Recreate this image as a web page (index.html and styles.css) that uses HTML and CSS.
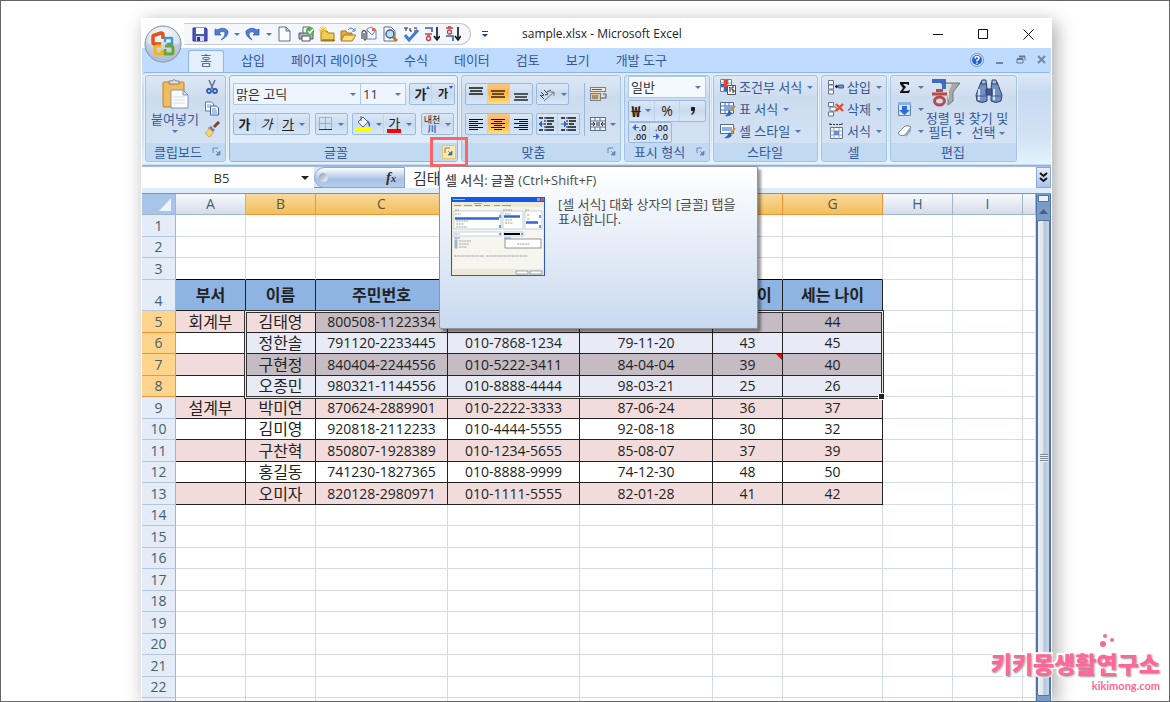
FILE: index.html
```html
<!DOCTYPE html>
<html lang="ko">
<head>
    <meta charset="UTF-8">
    <meta name="viewport" content="width=device-width, initial-scale=1.0">
    <title>sample.xlsx - Microsoft Excel</title>
    <link rel="stylesheet" href="styles.css">
</head>
<body>

<div class="window">
    <header class="titlebar">
        <button class="office" aria-label="Office 단추">
            <svg width="38" height="38" viewBox="0 0 38 38">
                <defs>
                    <radialGradient id="orb" cx=".5" cy=".3" r=".75"><stop offset="0" stop-color="#fff"/><stop offset=".55" stop-color="#dfe4ec"/><stop offset="1" stop-color="#8d9cb6"/></radialGradient>
                </defs>
                <circle cx="19" cy="19" r="18" fill="url(#orb)" stroke="#7f8fab"/>
                <path d="M2 20a17 17 0 0 0 34 0q-17-7-34 0z" fill="#b4c3dc" opacity=".55"/>
                <g fill="none" stroke-linejoin="round">
                    <path d="M17 19h-6q-2 0-2-2v-5q0-2 2-2l6-2q2 0 2 2v4" stroke="#e2521b" stroke-width="3.500"/>
                    <path d="M21 17v-4h7v6h-5" stroke="#3f9be0" stroke-width="2.500"/>
                    <path d="M17 21h-4q-2 0-2 2v4q0 2 2 2h5v-4" stroke="#f5b41a" stroke-width="3"/>
                    <path d="M21 21h6q2 0 2 2v4q0 2-2 2h-6v-5" stroke="#6aa82c" stroke-width="3"/>
                </g>
            </svg>
        </button>
        <div class="quick">
            <button aria-label="저장"><svg width="16" height="16"><path d="M1 2h13l1 1v12H1z" fill="#4a55b8" stroke="#2c3590"/><path d="M4 2h8v6H4z" fill="#fff"/><path d="M4 10h8v5H4z" fill="#d5dcf3"/><path d="M5 11h3v4H5z" fill="#2c3590"/></svg></button>
            <button aria-label="실행 취소"><svg width="16" height="16"><path d="M2 3v6h6L6 7q3-3 6-1 1 4-4 8 8-4 7-9-4-5-11-1z" fill="#4f7fd0" stroke="#2b57ab" stroke-width=".7"/></svg></button>
            <button class="drop" aria-label="실행 취소 목록"><i class="arrow"></i></button>
            <button aria-label="다시 실행"><svg width="16" height="16"><path d="M14 3v6H8l2-2Q7 4 4 7q-1 3 3 7Q0 10 1 5q5-5 11-1z" fill="#4f7fd0" stroke="#2b57ab" stroke-width=".7"/></svg></button>
            <button class="drop" aria-label="다시 실행 목록"><i class="arrow"></i></button>
            <button aria-label="새로 만들기"><svg width="16" height="16"><path d="M2 1h7l4 4v10H2z" fill="#fdfdff" stroke="#5d6f93"/><path d="M9 1v4h4z" fill="#cbd5ea" stroke="#5d6f93"/></svg></button>
            <button aria-label="빠른 인쇄"><svg width="16" height="16"><path d="M5 7V1h7v6" fill="#fff" stroke="#666"/><path d="M1 7h14v6H1z" fill="#adb2bd" stroke="#555c6c"/><path d="M4 10h8v5H4z" fill="#fff" stroke="#555"/><circle cx="12" cy="5" r="4" fill="#4eae49"/><path d="M10 5l2 2 3-4" fill="none" stroke="#fff" stroke-width="1.500"/></svg></button>
            <button aria-label="새 폴더"><svg width="16" height="16"><path d="M2 5h6l1 2h6v8H2z" fill="#f0cd57" stroke="#a6791b"/><path d="M3 14h12v1" stroke="#6f5213" fill="none"/><path d="M4 0v8M0 4h8M1 1l6 6M7 1L1 7" stroke="#f8bd22"/></svg></button>
            <button aria-label="열기"><svg width="16" height="16"><path d="M1 5h5l1 2h5v7H1z" fill="#e5ae3c" stroke="#a6791b"/><path d="M4 9h12l-4 6H1z" fill="#ffdf79" stroke="#a6791b"/><path d="M8 4q3-4 6 0M15 2v3h-3" fill="none" stroke="#4974be"/></svg></button>
            <button aria-label="전자 메일"><svg width="16" height="16"><path d="M6 3l4-2 5 3v9H6z" fill="#f4f8ff" stroke="#6d84ae"/><path d="M6 4l5 5 4-5" fill="none" stroke="#6d84ae"/><path d="M11 2h3v3h-3z" fill="#d86858"/><path d="M1 13V6q2-3 4 0v7q-1 2-2 0V7" fill="none" stroke="#555" stroke-width="1.300"/></svg></button>
            <button aria-label="인쇄 미리 보기"><svg width="16" height="16"><path d="M2 1h7l4 4v10H2z" fill="#fff" stroke="#5d6f93"/><path d="M11 11l4 4" stroke="#c27b23" stroke-width="3"/><circle cx="8" cy="8" r="4" fill="#bcdcf6" stroke="#405b80" stroke-width="1.400"/></svg></button>
            <button aria-label="맞춤법 검사"><svg width="16" height="16"><path d="M1 2h4M3 2v3M7 2v3h2M11 2h3M11 5h3" stroke="#222" fill="none"/><path d="M2 9l4 5L15 4" fill="none" stroke="#4979d2" stroke-width="3"/></svg></button>
            <button aria-label="오름차순 정렬"><svg width="16" height="16"><path d="M1 2h7v4" fill="none" stroke="#355eb6" stroke-width="1.600"/><path d="M1 8h7M3 10h3" stroke="#c2404c" stroke-width="1.400"/><circle cx="4.500" cy="12.500" r="2" fill="none" stroke="#c2404c" stroke-width="1.400"/><path d="M13 1v11M10 10l3 4 3-4" fill="none" stroke="#111" stroke-width="1.600"/></svg></button>
            <button aria-label="내림차순 정렬"><svg width="16" height="16"><path d="M1 2h7M3 1h3" stroke="#c2404c" stroke-width="1.400"/><circle cx="4.500" cy="6" r="2" fill="none" stroke="#c2404c" stroke-width="1.400"/><path d="M1 10h7v5" fill="none" stroke="#355eb6" stroke-width="1.600"/><path d="M13 1v11M10 10l3 4 3-4" fill="none" stroke="#111" stroke-width="1.600"/></svg></button>
        </div>
        <button class="customize" aria-label="빠른 실행 도구 모음 사용자 지정"><i class="arrow"></i></button>
        <span class="caption">sample.xlsx - Microsoft Excel</span>
        <div class="controls">
            <button aria-label="최소화"><svg width="11" height="11"><path d="M0 5.500h10" stroke="#111"/></svg></button>
            <button aria-label="최대화"><svg width="11" height="11"><path d="M.5.5h9v9h-9z" fill="none" stroke="#111"/></svg></button>
            <button aria-label="닫기"><svg width="11" height="11"><path d="M.5.5l10 10M10.500.5l-10 10" stroke="#111"/></svg></button>
        </div>
    </header>

    <nav class="tabs">
        <a class="tab active" href="#home">홈</a>
        <a class="tab" href="#insert">삽입</a>
        <a class="tab" href="#layout">페이지 레이아웃</a>
        <a class="tab" href="#formulas">수식</a>
        <a class="tab" href="#data">데이터</a>
        <a class="tab" href="#review">검토</a>
        <a class="tab" href="#view">보기</a>
        <a class="tab" href="#developer">개발 도구</a>
        <div class="doc-controls">
            <button aria-label="도움말"><svg width="14" height="14"><circle cx="7" cy="7" r="6.500" fill="#dcebff" stroke="#6c93cf"/><circle cx="7" cy="7" r="5" fill="#2a62d4"/><path d="M5 5.500q0-2 2-2t2 1.600Q9 6.500 7 7.500v1M7 9.500v1.300" fill="none" stroke="#fff" stroke-width="1.500"/></svg></button>
            <button aria-label="창 최소화"><svg width="10" height="10"><path d="M1 8h7" stroke="#74869f" stroke-width="2"/></svg></button>
            <button aria-label="창 복원"><svg width="10" height="10"><path d="M3 1.500h6v4M1 4h6v4H1z" fill="none" stroke="#66768d"/><path d="M3 1.500h6M1 4h6" stroke="#66768d" stroke-width="2"/></svg></button>
            <button aria-label="창 닫기"><svg width="10" height="10"><path d="M1 1l7 7M8 1L1 8" stroke="#74869f" stroke-width="2"/></svg></button>
        </div>
    </nav>

    <div class="ribbon">
        <section class="group clipboard">
            <div class="body">
                <button class="big">
                    <svg width="28" height="30"><rect x="2" y="3" width="21" height="25" rx="1" fill="#f1bd5b" stroke="#bf8128"/><path d="M8 5V2h3q2-3 4 0h3v3z" fill="#dfe3e9" stroke="#7c828c"/><path d="M10 11h12l5 5v13H10z" fill="#fbfcff" stroke="#8794b0"/><path d="M22 11v5h5z" fill="#d5ddec" stroke="#8794b0"/><path d="M12 18h12M12 21h12M12 24h12" stroke="#d4dae6"/></svg>
                    붙여넣기
                    <i class="arrow"></i>
                </button>
                <div class="stack">
                    <button aria-label="잘라내기"><svg width="16" height="16"><path d="M5 1l4 9M11 1L7 10" stroke="#68768f" stroke-width="1.600"/><circle cx="5" cy="12" r="2" fill="none" stroke="#2d5eb6" stroke-width="1.800"/><circle cx="11" cy="12" r="2" fill="none" stroke="#2d5eb6" stroke-width="1.800"/></svg></button>
                    <button aria-label="복사"><svg width="16" height="16"><path d="M1.500 2h6l2 2v7h-8z" fill="#fff" stroke="#5576b4"/><path d="M3 5h4M3 7h4" stroke="#7d9fd8"/><path d="M6.500 6h6l2 2v7h-8z" fill="#fff" stroke="#3e62a6"/><path d="M8 9h4M8 11h5M8 13h5" stroke="#6289cc"/></svg></button>
                    <button aria-label="서식 복사"><svg width="16" height="16"><path d="M15 1l-5 5" stroke="#7a4820" stroke-width="3"/><path d="M7 5l4 4-2 2-5-4z" fill="#7883a4"/><path d="M5 7l4 4q-1 4-4 5L1 12q3-1 4-5z" fill="#f7d66a" stroke="#c59530" stroke-width=".7"/></svg></button>
                </div>
            </div>
            <div class="label"><span>클립보드</span><button class="launcher" aria-label="클립보드 옵션"><svg width="10" height="10"><path d="M1 6V1h5" fill="none" stroke="#6a88b4"/><path d="M4 4l3 3M8 4v4H4z" stroke="#6a88b4" stroke-width=".8" fill="#6a88b4"/></svg></button></div>
        </section>

        <section class="group font hot">
            <div class="body rows">
                <div class="line">
                    <div class="combos">
                        <span class="combo family"><select aria-label="글꼴"><option>맑은 고딕</option></select><i class="arrow"></i></span>
                        <span class="combo size"><select aria-label="글꼴 크기"><option>11</option></select><i class="arrow"></i></span>
                    </div>
                    <div class="strip">
                        <button class="wide strong" aria-label="글꼴 크기 크게"><b>가</b><i class="tick up"></i></button>
                        <button class="wide small" aria-label="글꼴 크기 작게"><b>가</b><i class="tick"></i></button>
                    </div>
                </div>
                <div class="line">
                    <div class="strip">
                        <button class="wide"><b>가</b></button>
                        <button class="wide"><em>가</em></button>
                        <button class="pick"><u>가</u><i class="arrow"></i></button>
                    </div>
                    <div class="strip">
                        <button class="pick" aria-label="테두리"><svg width="14" height="14"><path d="M.5.5h12v12H.5zM.5 6.500h12M6.500.5v12" fill="none" stroke="#7b8798" stroke-dasharray="1 1"/><path d="M0 12.500h13" stroke="#333"/></svg><i class="arrow"></i></button>
                    </div>
                    <div class="strip">
                        <button class="pick" aria-label="채우기 색"><svg width="16" height="16"><path d="M3 6l5-5 5 5-5 5z" fill="#f2f6fc" stroke="#4f6485"/><path d="M6 5V0" stroke="#4f6485"/><path d="M12 4q4 2 3 7-2-1-2-4z" fill="#3a6ed0"/><path d="M0 12h16v4H0z" fill="#ff0"/></svg><i class="arrow"></i></button>
                        <button class="pick" aria-label="글꼴 색"><span class="swatch">가</span><i class="arrow"></i></button>
                    </div>
                    <div class="strip">
                        <button class="pick ruby" aria-label="윗주 필드"><span>내천<b>川</b></span><i class="arrow"></i></button>
                    </div>
                </div>
            </div>
            <div class="label">
                <span>글꼴</span>
                <div class="anchor">
                    <button class="launcher" aria-label="글꼴 옵션"><svg width="10" height="10"><path d="M1 6V1h5" fill="none" stroke="#6f7f91"/><path d="M4 4l3 3M8 4v4H4z" stroke="#48709e" stroke-width=".8" fill="#48709e"/></svg></button>
                    <div class="callout"></div>
                    <div class="tooltip">
                        <h2>셀 서식: 글꼴 (Ctrl+Shift+F)</h2>
                        <div class="tip">
                            <svg class="thumb" width="94" height="79" viewBox="0 0 94 79">
                                <rect width="94" height="79" fill="#2d58c4"/>
                                <rect width="94" height="5" fill="#1557e6"/><path d="M2 2.500h12" stroke="#9fc0ff"/><rect x="86" y="1" width="3" height="3" fill="#7aa6f8"/><rect x="90" y="1" width="3" height="3" fill="#e0543a"/>
                                <rect x="1" y="5" width="92" height="73" fill="#ece9d8"/>
                                <rect x="2" y="10" width="90" height="62" fill="#f7f6ee"/>
                                <path d="M3 8.500h7M13 8.500h8M33 8.500h6M43 8.500h6M51 8.500h9" stroke="#9b9b93"/><path d="M23 6.500h8" stroke="#f09b30"/><path d="M24 8.500h6" stroke="#888"/>
                                <g fill="#fff" stroke="#9fb5d0" stroke-width=".6"><rect x="3" y="14" width="47" height="18"/><rect x="52" y="14" width="20" height="18"/><rect x="74" y="14" width="17" height="18"/><rect x="3" y="35" width="47" height="4"/><rect x="53" y="35" width="19" height="4"/><rect x="54" y="42" width="36" height="9" stroke="#555"/></g>
                                <path d="M4 21.500h44M53 19.500h16M75 25.500h12" stroke="#316ac5" stroke-width="2.500"/>
                                <path d="M4 13h4M52 13h9M74 13h4M4 17h6M5 24h12M5 27h8M5 30h11M54 17h6M54 23h7M54 26h8M76 18h3M76 22h3M4 37h5M8 44h12M8 47h10M8 50h8M66 47h13M3 59h30M35 59h42" stroke="#8a8a8a" stroke-width=".8" stroke-dasharray="2 .6"/>
                                <path d="M3 41h6M53 41h7" stroke="#6f96e0"/><path d="M53 37h16" stroke="#000" stroke-width="2"/>
                                <path d="M49 18v3M49 28v3M89 18v3M89 28v3M48 37h2M70 37h2" stroke="#7299e8" stroke-width="2"/>
                                <g fill="#fff" stroke="#4d73a5" stroke-width=".6"><rect x="4" y="43" width="2" height="2"/><rect x="4" y="46" width="2" height="2"/><rect x="4" y="49" width="2" height="2"/><rect x="65" y="74" width="12" height="3"/><rect x="79" y="74" width="12" height="3"/></g>
                            </svg>
                            <p>[셀 서식] 대화 상자의 [글꼴] 탭을 표시합니다.</p>
                        </div>
                    </div>
                </div>
            </div>
        </section>

        <section class="group align">
            <div class="body">
                <div class="rows">
                    <div class="line">
                        <div class="strip">
                            <button class="wide" aria-label="위쪽 맞춤"><svg width="15" height="14"><path d="M0 1h14M1 4h12M0 7h14" stroke="#444" stroke-width="2"/></svg></button>
                            <button class="wide on" aria-label="가운데 맞춤"><svg width="15" height="14"><path d="M0 4h14M1 7h12M0 10h14" stroke="#6b4d1c" stroke-width="2"/></svg></button>
                            <button class="wide" aria-label="아래쪽 맞춤"><svg width="15" height="14"><path d="M0 7h14M1 10h12M0 13h14" stroke="#555" stroke-width="2"/></svg></button>
                        </div>
                        <div class="strip">
                            <button class="pick" aria-label="방향"><svg width="17" height="16"><path d="M1 9l4 4M2 6l3 3-3 1M5 4l4 4-3 1M8 6l4-2" fill="none" stroke="#444"/><path d="M5 15L15 6M11 6h4v4" fill="none" stroke="#777"/></svg><i class="arrow"></i></button>
                        </div>
                    </div>
                    <div class="line">
                        <div class="strip">
                            <button class="wide" aria-label="텍스트 왼쪽 맞춤"><svg width="15" height="13"><path d="M0 1.500h14M0 3.500h9M0 5.500h14M0 7.500h9M0 9.500h14M0 11.500h9" stroke="#111"/></svg></button>
                            <button class="wide on" aria-label="텍스트 가운데 맞춤"><svg width="15" height="13"><path d="M0 1.500h14M3 3.500h8M0 5.500h14M3 7.500h8M0 9.500h14M3 11.500h8" stroke="#111"/></svg></button>
                            <button class="wide" aria-label="텍스트 오른쪽 맞춤"><svg width="15" height="13"><path d="M0 1.500h14M5 3.500h9M0 5.500h14M5 7.500h9M0 9.500h14M5 11.500h9" stroke="#111"/></svg></button>
                        </div>
                        <div class="strip">
                            <button class="indent" aria-label="내어쓰기"><svg width="16" height="14"><path d="M0 1h4M7 1h8M8 4h7M8 7h5M7 10h8M0 13h4M7 13h8" stroke="#111" stroke-width="1.600"/><path d="M6 0v14" stroke="#111" stroke-dasharray="2 1"/><path d="M6 7H1M3 4L0 7l3 3" stroke="#2f67cb" fill="#2f67cb"/></svg></button>
                            <button class="indent" aria-label="들여쓰기"><svg width="16" height="14"><path d="M0 1h4M7 1h8M8 4h7M8 7h5M7 10h8M0 13h4M7 13h8" stroke="#111" stroke-width="1.600"/><path d="M6 0v14" stroke="#111" stroke-dasharray="2 1"/><path d="M0 7h5M3 4l3 3-3 3" stroke="#2f67cb" fill="#2f67cb"/></svg></button>
                        </div>
                    </div>
                </div>
                <div class="rows merge">
                    <button aria-label="텍스트 줄 바꿈"><svg width="17" height="16"><rect x=".5" y="1.500" width="15" height="4" fill="#f8e9cf" stroke="#75818f"/><rect x=".5" y="7.500" width="10" height="7" fill="#f3c581" stroke="#75818f"/><path d="M2 10h6M2 12h6M2 3.500h10" stroke="#4c5b70"/><path d="M13 8h3v4h-5" fill="none" stroke="#555"/></svg></button>
                    <button aria-label="병합하고 가운데 맞춤"><svg width="16" height="16"><rect x=".5" y="1.500" width="15" height="13" fill="#eef4fd" stroke="#61728a"/><path d="M5 1v4M10 1v4M5 11v4M10 11v4M0 5h16M0 11h16" stroke="#61728a"/><path d="M1 8h4M11 8h4M3 6l2 2-2 2M13 6l-2 2 2 2M7 6v4M9 6v4" stroke="#222" fill="none"/></svg><i class="arrow"></i></button>
                </div>
            </div>
            <div class="label"><span>맞춤</span><button class="launcher" aria-label="맞춤 옵션"><svg width="10" height="10"><path d="M1 6V1h5" fill="none" stroke="#6a88b4"/><path d="M4 4l3 3M8 4v4H4z" stroke="#6a88b4" stroke-width=".8" fill="#6a88b4"/></svg></button></div>
        </section>

        <section class="group number">
            <div class="body tight">
                <span class="combo"><select aria-label="표시 형식"><option>일반</option></select><i class="arrow"></i></span>
                <div class="strip full">
                    <button class="pick"><b class="won">₩</b><i class="arrow"></i></button>
                    <button class="glyph">%</button>
                    <button class="glyph" aria-label="쉼표 스타일"><svg width="6" height="10"><path d="M1 1h4v3q0 3-3 5l-1-1q2-1 2-3H1z" fill="#222"/></svg></button>
                </div>
                <div class="strip half">
                    <button aria-label="자릿수 늘림"><span class="digits"><span><svg width="7" height="7"><path d="M7 3.500H2M4 .5l-3 3 3 3" stroke="#2f67cb" fill="#2f67cb"/></svg>.0</span><span>.00</span></span></button>
                    <button aria-label="자릿수 줄임"><span class="digits"><span>.00</span><span><svg width="7" height="7"><path d="M0 3.500h5M3 .5l3 3-3 3" stroke="#2f67cb" fill="#2f67cb"/></svg>.0</span></span></button>
                </div>
            </div>
            <div class="label"><span>표시 형식</span><button class="launcher" aria-label="표시 형식 옵션"><svg width="10" height="10"><path d="M1 6V1h5" fill="none" stroke="#6a88b4"/><path d="M4 4l3 3M8 4v4H4z" stroke="#6a88b4" stroke-width=".8" fill="#6a88b4"/></svg></button></div>
        </section>

        <section class="group style">
            <div class="body menu">
                <button><svg width="16" height="16"><path d="M.5.5h11v12H.5z" fill="#fff" stroke="#6e7fa0"/><path d="M4 1v12M8 1v12M1 4h10M1 8h10" stroke="#8ba1c8"/><path d="M4 1h4v4H4z" fill="#e0452f"/><path d="M1 5h3v3H1zM4 8h4v4H4z" fill="#3469c4"/><path d="M4 5h3v3H4z" fill="#e0452f"/><path d="M7.500 6.500h8v9h-8z" fill="#fff" stroke="#555"/><path d="M9 9l1-1v5M12 13h2v-2h-2V8h2" fill="none" stroke="#222"/></svg>조건부 서식<i class="arrow"></i></button>
                <button><svg width="16" height="16"><path d="M.5 1.500h13v11H.5z" fill="#fff" stroke="#4d6aa0"/><path d="M5 1v12M9 1v12M1 5h13M1 9h13" stroke="#4d6aa0"/><path d="M5 5h9v4H5z" fill="#7ba6e6"/><path d="M15 5l-4 5" stroke="#d18b2c" stroke-width="2"/><path d="M9 9l3 3q-2 4-7 3 3-2 4-6z" fill="#2f62c4"/></svg>표 서식<i class="arrow"></i></button>
                <button><svg width="16" height="16"><path d="M.5 1.500h13v9H.5z" fill="#fff" stroke="#4d6aa0"/><path d="M2 4h10v4H2z" fill="#89b0ea"/><path d="M15 5l-4 5" stroke="#d18b2c" stroke-width="2"/><path d="M9 9l3 3q-2 4-8 3 4-2 5-6z" fill="#2f62c4"/></svg>셀 스타일<i class="arrow"></i></button>
            </div>
            <div class="label"><span>스타일</span></div>
        </section>

        <section class="group cell">
            <div class="body menu">
                <button><svg width="16" height="16"><path d="M.5 1.500h5v4h-5zM.5 6h5v4h-5zM.5 11h5v4h-5z" fill="#fff" stroke="#64748e"/><path d="M10.500 6h5v3h-5z" fill="#6f96d8" stroke="#3a5d9c"/><path d="M10 7.500H7M9 6L7 7.500 9 9z" stroke="#222" fill="#222"/></svg>삽입<i class="arrow"></i></button>
                <button><svg width="16" height="16"><path d="M.5 1.500h5v4h-5zM2 6h6v4H2zM.5 11h5v4h-5z" fill="#fff" stroke="#64748e"/><path d="M8 3l7 7M15 3l-7 7" stroke="#f04a28" stroke-width="2.400"/></svg>삭제<i class="arrow"></i></button>
                <button><svg width="16" height="16"><path d="M2 1.500h12M2 0v3M14 0v3" stroke="#333" stroke-dasharray="2 1"/><path d="M2.500 4.500h12v11h-12z" fill="#fff" stroke="#64748e"/><path d="M6 5v11M11 5v11M2 8h12M2 12h12" stroke="#8fa1bd"/><path d="M6 8h5v4H6z" fill="#5e8fdc"/></svg>서식<i class="arrow"></i></button>
            </div>
            <div class="label"><span>셀</span></div>
        </section>

        <section class="group edit">
            <div class="body">
                <div class="menu">
                    <button aria-label="합계"><svg width="16" height="14"><path d="M3 2h9v3h-1q0-1-2-1H6l3 3-3 4h4q2 0 2-1h1l-1 3H3v-1l3-4-3-4z" fill="#111"/></svg><i class="arrow"></i></button>
                    <button aria-label="채우기"><svg width="16" height="16"><path d="M1.500 1.500h12v13h-12z" fill="#d5e5fb" stroke="#5f83bd"/><path d="M1 1h13v3H1z" fill="#8fb1e6"/><path d="M5 5h5v4h3l-5.500 5L2 9h3z" fill="#2f6bd8"/></svg><i class="arrow"></i></button>
                    <button aria-label="지우기"><svg width="16" height="14"><path d="M1 9l7-7q3-1 6 1l-6 8q-5 2-7-2z" fill="#fff" stroke="#74808f"/><path d="M8 11l6-8v4l-5 6z" fill="#9aa7b8"/></svg><i class="arrow"></i></button>
                </div>
                <button class="big">
                    <svg width="30" height="29"><path d="M10 5h19l-7 9v9l-5 4V14z" fill="#a9a9a9" stroke="#777"/><path d="M12 6h9l-3 7v9z" fill="#dcdcdc"/><path d="M1 3h12v8" fill="none" stroke="#3d6cc0" stroke-width="4"/><path d="M1 16h15M5 12.500h7" stroke="#b84a4a" stroke-width="3"/><ellipse cx="8.500" cy="23" rx="5" ry="4" fill="none" stroke="#b84a4a" stroke-width="3"/></svg>
                    <span>정렬 및<br>필터<i class="arrow"></i></span>
                </button>
                <button class="big">
                    <svg width="28" height="29"><g stroke="#2c4270"><path d="M6 4h5l1 6v13q-5 3-10 0l-1-6z" fill="#7290c0"/><path d="M22 4h-5l-1 6v13q5 3 10 0l1-6z" fill="#7290c0"/><path d="M11 11h6v6h-6z" fill="#40598c"/><path d="M7 2h4v4H6zM17 2h4l1 4h-5z" fill="#a8bddf"/></g><path d="M4 11v11M19 11v11" stroke="#d9e5f8" stroke-width="2"/><path d="M2 18h9M17 18h9" stroke="#40598c"/></svg>
                    <span>찾기 및<br>선택<i class="arrow"></i></span>
                </button>
            </div>
            <div class="label"><span>편집</span></div>
        </section>
    </div>

    <div class="formula">
        <label class="namebox"><input aria-label="이름 상자" value="B5"><i class="arrow"></i></label>
        <div class="insert-fn"><span class="knob"></span><button aria-label="함수 삽입"><em>f<small>x</small></em></button></div>
        <input class="entry" aria-label="수식 입력줄" value="김태영">
        <button class="expand" aria-label="수식 입력줄 확장"><svg width="9" height="11"><path d="M1 1l3.500 3L8 1M1 6l3.500 3L8 6" fill="none" stroke="#111" stroke-width="2"/></svg></button>
    </div>

    <div class="workspace">
        <div class="sheet">
            <table>
                <colgroup>
                    <col class="c-head"><col class="c-s"><col class="c-s"><col class="c-l"><col class="c-l"><col class="c-xl"><col class="c-s"><col class="c-m"><col class="c-s"><col class="c-s"><col>
                </colgroup>
                <thead>
                    <tr><th class="corner"><svg width="12" height="13"><path d="M12 0v13H0z" fill="#eef4fc"/></svg></th><th>A</th><th class="sel">B</th><th class="sel">C</th><th class="sel">D</th><th class="sel">E</th><th class="sel">F</th><th class="sel">G</th><th>H</th><th>I</th><th></th></tr>
                </thead>
                <tbody>
                    <tr><th>1</th><td></td><td></td><td></td><td></td><td></td><td></td><td></td><td></td><td></td><td></td></tr>
                    <tr><th>2</th><td></td><td></td><td></td><td></td><td></td><td></td><td></td><td></td><td></td><td></td></tr>
                    <tr class="above"><th>3</th><td></td><td></td><td></td><td></td><td></td><td></td><td></td><td></td><td></td><td></td></tr>
                    <tr class="data head"><th>4</th><td>부서</td><td>이름</td><td>주민번호</td><td></td><td></td><td>만 나이</td><td>세는 나이</td><td></td><td></td><td></td></tr>
                    <tr class="data band picked"><th>5</th><td class="ko">회계부</td><td class="ko current">김태영</td><td>800508-1122334</td><td></td><td></td><td></td><td>44</td><td></td><td></td><td></td></tr>
                    <tr class="data picked"><th>6</th><td></td><td class="ko">정한솔</td><td>791120-2233445</td><td>010-7868-1234</td><td>79-11-20</td><td>43</td><td>45</td><td></td><td></td><td></td></tr>
                    <tr class="data band picked"><th>7</th><td></td><td class="ko">구현정</td><td>840404-2244556</td><td>010-5222-3411</td><td>84-04-04</td><td class="memo">39</td><td>40</td><td></td><td></td><td></td></tr>
                    <tr class="data picked"><th>8</th><td></td><td class="ko">오종민</td><td>980321-1144556</td><td>010-8888-4444</td><td>98-03-21</td><td>25</td><td>26</td><td></td><td></td><td></td></tr>
                    <tr class="data band"><th>9</th><td class="ko">설계부</td><td class="ko">박미연</td><td>870624-2889901</td><td>010-2222-3333</td><td>87-06-24</td><td>36</td><td>37</td><td></td><td></td><td></td></tr>
                    <tr class="data"><th>10</th><td></td><td class="ko">김미영</td><td>920818-2112233</td><td>010-4444-5555</td><td>92-08-18</td><td>30</td><td>32</td><td></td><td></td><td></td></tr>
                    <tr class="data band"><th>11</th><td></td><td class="ko">구찬혁</td><td>850807-1928389</td><td>010-1234-5655</td><td>85-08-07</td><td>37</td><td>39</td><td></td><td></td><td></td></tr>
                    <tr class="data"><th>12</th><td></td><td class="ko">홍길동</td><td>741230-1827365</td><td>010-8888-9999</td><td>74-12-30</td><td>48</td><td>50</td><td></td><td></td><td></td></tr>
                    <tr class="data band"><th>13</th><td></td><td class="ko">오미자</td><td>820128-2980971</td><td>010-1111-5555</td><td>82-01-28</td><td>41</td><td>42</td><td></td><td></td><td></td></tr>
                    <tr><th>14</th><td></td><td></td><td></td><td></td><td></td><td></td><td></td><td></td><td></td><td></td></tr>
                    <tr><th>15</th><td></td><td></td><td></td><td></td><td></td><td></td><td></td><td></td><td></td><td></td></tr>
                    <tr><th>16</th><td></td><td></td><td></td><td></td><td></td><td></td><td></td><td></td><td></td><td></td></tr>
                    <tr><th>17</th><td></td><td></td><td></td><td></td><td></td><td></td><td></td><td></td><td></td><td></td></tr>
                    <tr><th>18</th><td></td><td></td><td></td><td></td><td></td><td></td><td></td><td></td><td></td><td></td></tr>
                    <tr><th>19</th><td></td><td></td><td></td><td></td><td></td><td></td><td></td><td></td><td></td><td></td></tr>
                    <tr><th>20</th><td></td><td></td><td></td><td></td><td></td><td></td><td></td><td></td><td></td><td></td></tr>
                    <tr><th>21</th><td></td><td></td><td></td><td></td><td></td><td></td><td></td><td></td><td></td><td></td></tr>
                    <tr><th>22</th><td></td><td></td><td></td><td></td><td></td><td></td><td></td><td></td><td></td><td></td></tr>
                    <tr><th></th><td></td><td></td><td></td><td></td><td></td><td></td><td></td><td></td><td></td><td></td></tr>
                </tbody>
            </table>
            <div class="marquee"></div>
        </div>
        <div class="scroll">
            <div class="split"></div>
            <button aria-label="위로 스크롤"><svg width="9" height="5"><path d="M0 5l4.500-5L9 5z" fill="#4f5f80"/></svg></button>
            <div class="thumb-bar"><span class="grip"></span></div>
        </div>
    </div>
</div>

<div class="brand">
    <svg width="16" height="14"><g fill="#ff6699"><circle cx="6" cy="3" r="2"/><circle cx="13" cy="7" r="2"/><circle cx="4" cy="11" r="3"/></g></svg>
    <strong>키키몽생활연구소</strong>
    <span>kikimong.com</span>
</div>

</body>
</html>
```
FILE: styles.css
```css
* { box-sizing: border-box; }

body { margin: 0; height: 100vh; padding: 17px 117px 0 140px; overflow: hidden; position: relative; display: flex;
      border: 1px solid #666; background: #fff; font: 13px/16px "Open Sans", "Noto Sans CJK KR", sans-serif; }

button { font: inherit; color: inherit; background: none; border: 0; padding: 0; display: flex; align-items: center; justify-content: center; }
input, select { font: inherit; border: 0; border-radius: 0; background: #fff; color: #333; min-width: 0; outline: none; }
a { text-decoration: none; }
svg { display: block; flex: none; }

.arrow { width: 0; height: 0; flex: none; border: 3px solid transparent; border-top-color: #5478b4; border-bottom: 0; }

.window { flex: 1; min-width: 0; display: flex; flex-direction: column; position: relative; padding: 0 1px; background: #fff;
         box-shadow: 4px 4px 18px rgba(0, 0, 0, 0.35); }

/* Title bar */
.titlebar { height: 30px; flex: none; display: flex; align-items: center; padding-top: 2px; }
.office { position: absolute; left: 3px; top: 7px; z-index: 2; border-radius: 50%; }
.quick { margin-left: 42px; height: 22px; padding: 0 9px 0 7px; display: flex; align-items: center; gap: 5px;
        background: #f3f6fb; border: 1px solid #c3c9d3; border-left-color: transparent; border-radius: 0 11px 11px 0; }
.customize { margin-left: 11px; padding-top: 3px; }
.customize .arrow { border-top-color: #1d4288; }
.customize::before { content: ""; position: absolute; width: 6px; height: 1px; margin-bottom: 8px; background: #1d4288; }
.caption { margin-left: 34px; font-size: 12px; color: #222; }
.controls { margin-left: auto; display: flex; }
.controls button { width: 45px; height: 28px; }

/* Tabs */
.tabs { height: 24px; flex: none; display: flex; align-items: flex-end; padding-left: 46px; background: #bfdbff; color: #3c5f9c; }
.tab { height: 22px; padding: 0 13px; line-height: 20px; color: #34599b; }
.tab.active { padding: 0 11px; margin-right: 4px; line-height: 18px; background: #e6f0fc; border: 1px solid #8fb6ea; border-bottom: 0; border-radius: 3px 3px 0 0; }
.doc-controls { margin-left: auto; height: 24px; padding-right: 4px; display: flex; align-items: center; gap: 11px; }

/* Ribbon */
.ribbon { height: 95px; flex: none; display: flex; align-items: flex-start; gap: 3px; padding: 2px 3px 0; position: relative;
         background: linear-gradient(#dce9f8, #c8daf0 20%, #d3e3f5 70%, #e3f4ff 97%, #8fadd6 98%, #a9c3e6);
         border-top: 1px solid #8fb6ea; border-radius: 3px 3px 0 0; color: #34599b; }
.group { height: 87px; flex: none; display: flex; flex-direction: column; border: 1px solid #a3c2e6; border-radius: 3px;
        background: linear-gradient(#dde8f6, #ccdcef 25%, #d5e5f6); box-shadow: 0 0 0 1px #e8f2fd; }
.group.hot { background: linear-gradient(#eaf3fe, #dbe8f9 30%, #e2effd); border-color: #92b5e0; }
.clipboard { width: 81px; }
.font { width: 229px; }
.align { width: 160px; }
.number { width: 86px; }
.style { width: 105px; }
.cell { width: 66px; }
.edit { width: 127px; }
.body { flex: 1; min-height: 0; display: flex; }
.label { height: 18px; flex: none; display: flex; align-items: center; padding-right: 1px; background: #c1d9f1; border-radius: 0 0 2px 2px; }
.label > span { flex: 1; text-align: center; }
.launcher { width: 14px; height: 14px; }
.hot .launcher { background: #fde9a9; border: 1px solid #e3c77b; }

.big { flex-direction: column; justify-content: flex-start; padding-top: 2px; gap: 4px; line-height: 14px; }
.big .arrow { display: inline-block; margin-left: 4px; vertical-align: middle; }
.clipboard .big { width: 58px; line-height: 18px; padding-top: 3px; gap: 1px; }
.clipboard .big .arrow { margin: 1px 0 0; }
.stack { display: flex; flex-direction: column; gap: 5px; padding-top: 3px; }

.rows { display: flex; flex-direction: column; gap: 8px; padding: 7px 3px 0; }
.line { display: flex; gap: 3px; }
.font .line { justify-content: space-between; }
.combos { display: flex; }
.combo { height: 22px; position: relative; display: flex; background: #eef5fd; border: 1px solid #b0c9e8; color: #333; }
.combo select { flex: 1; appearance: none; padding: 0 2px; background: none; line-height: 20px; }
.combo .arrow { position: absolute; right: 4px; top: 9px; pointer-events: none; }
.family { width: 128px; }
.size { width: 46px; margin-left: -1px; }
.strip { display: flex; height: 22px; border: 1px solid #9bb8df; border-radius: 2px; background: linear-gradient(#dbe7f6, #c9dbf0 50%, #d8e6f7); color: #222; }
.strip button { position: relative; border-right: 1px solid #c2d4ec; }
.strip button:last-child { border-right: 0; }
.wide { width: 22px; }
.pick { width: 31px; gap: 5px; }
.small { font-size: 11px; }
.tick { position: absolute; right: 1px; top: 2px; border: 2px solid transparent; border-top: 3px solid #2b57ab; border-bottom: 0; }
.tick.up { border-top: 0; border-bottom: 3px solid #2b57ab; }
.swatch { height: 17px; line-height: 14px; border-bottom: 4px solid #f00; padding: 0 1px; }
.ruby span { font-size: 9px; line-height: 9px; width: 17px; }
.ruby b { display: block; color: #2d5fc8; }
.on { background: linear-gradient(#fbc884, #fdb04a 45%, #ffe07a); }
.indent { width: 21px; }
.align .rows { padding-right: 0; }
.align .rows.merge { margin: 7px 0 7px 4px; padding: 0 0 0 5px; border-left: 1px solid #9bb8df; }
.merge button { height: 22px; gap: 4px; justify-content: flex-start; }

.tight { flex-direction: column; padding: 0 3px; }
.tight .strip { height: 22px; }
.tight .combo { margin-bottom: 2px; background: #f4f9fe; }
.full button { flex: 1; }
.won { font-size: 15px; }
.glyph { font-size: 14px; }
.half { align-self: flex-start; }
.half button { width: 21px; }
.digits { display: flex; flex-direction: column; font-size: 9px; line-height: 9px; font-weight: 600; }
.digits span { display: flex; align-items: center; justify-content: flex-end; }

.menu { display: flex; flex-direction: column; align-items: flex-start; padding: 0 0 0 6px; gap: 0; }
.menu button { height: 22px; gap: 3px; }
.menu .arrow { margin-left: 2px; }
.edit .big { width: 43px; }

/* Highlight frame and screen tip over the font launcher */
.anchor { position: relative; }
.callout { position: absolute; left: -12px; top: -8px; width: 38px; height: 30px; border: 3px solid #ff6464; z-index: 3; }
.tooltip { position: absolute; left: -3px; top: 21px; z-index: 4; width: 319px; height: 163px; padding: 5px; color: #4c4c4c;
          background: linear-gradient(#fff, #c9d9ef); border: 1px solid #8d949e; border-radius: 2px; box-shadow: 3px 3px 3px rgba(0, 0, 0, 0.4); }
.tooltip h2 { margin: 0; font-size: 13px; line-height: 16px; font-weight: 500; }
.tip { display: flex; gap: 13px; padding: 9px 6px; }
.tip p { margin: 0; line-height: 15px; }

/* Formula bar */
.formula { height: 27px; flex: none; display: flex; padding-bottom: 5px; border-bottom: 1px solid #6f95c2; background: #d8e7f8; box-shadow: inset 0 -5px #dfecfa, inset 0 -6px #6f95c2; }
.namebox { width: 172px; display: flex; align-items: center; background: #fff; padding-right: 5px; }
.namebox input { flex: 1; text-align: center; }
.namebox .arrow { border-width: 4px 4px 0; border-top-color: #222; }
.insert-fn { width: 91px; display: flex; align-items: center; justify-content: space-between; padding: 0 8px 0 4px;
            background: linear-gradient(#fff, #a8c1e6 60%, #b7cdec); border: 1px solid #88a8d0; border-radius: 11px 0 0 11px; }
.knob { width: 9px; height: 9px; border-radius: 50%; background: linear-gradient(135deg, #8f9db3, #f5f8fc); }
.insert-fn em { font: italic bold 15px/16px "Liberation Serif", serif; color: #333; }
.insert-fn small { font-size: 10px; }
.entry { flex: 1; padding: 0 8px; font-size: 15px; }
.expand { width: 15px; border: 1px solid #8aa9d2; background: linear-gradient(#e4eefb, #a9c4e9); }

/* Sheet */
.workspace { flex: 1; min-height: 0; display: flex; overflow: hidden; }
.sheet { flex: 1; min-width: 0; position: relative; }
table { width: 100%; table-layout: fixed; border-collapse: separate; border-spacing: 0; }
.c-head { width: 34px; }
.c-s { width: 70px; }
.c-m { width: 100px; }
.c-l { width: 132px; }
.c-xl { width: 133px; }
th, td { padding: 0; height: 21px; overflow: hidden; text-align: center; font-size: 14px; line-height: 18px; font-weight: 400; white-space: nowrap; color: #222; }
tbody tr:nth-child(odd) > * { height: 22px; }
td { border-right: 1px solid #d3dbeb; border-bottom: 1px solid #d3dbeb; }
th { color: #44606e; background: #e4ecf7; border-right: 1px solid #9eb6ce; border-bottom: 1px solid #b3c6dc; }
thead th { height: 21px; background: linear-gradient(#f7f9fc, #d5dde9); border-bottom-color: #9eb6ce; }
thead .sel { background: linear-gradient(#f9d99f, #f1bf5c); border-color: #f29536; color: #5b5737; }
thead .corner { background: #a9c4e9; border-color: #9eb6ce; }
.corner svg { margin: 0 4px 0 auto; }
.above td:nth-child(-n+8) { border-bottom-color: #000; }
.data td:nth-child(-n+8) { border-color: #222; }
.band td:nth-child(-n+8) { background: #f2dcdb; }
.data.head > * { height: 31px; }
.head th { vertical-align: bottom; }
.data.head td { font-size: 16px; font-weight: 700; }
.head td:nth-child(-n+8) { background: #8db4e3; }
.ko { font-size: 16px; }
.picked th { background: #ffd58d; border-color: #f29536; }
.picked td:nth-child(n+3):nth-child(-n+8) { background: #e8ebf5; }
.picked.band td:nth-child(n+3):nth-child(-n+8):not(.current) { background: #c4bbc3; }
.picked.band .current.current.current { background: #f2dcdb; }
.memo { position: relative; }
.memo::after { content: ""; position: absolute; right: 0; top: 0; border: 3px solid #f00; border-left-color: transparent; border-bottom-color: transparent; }
.marquee { position: absolute; left: 102px; top: 116px; width: 640px; height: 89px; pointer-events: none;
          border: 1px solid #333; box-shadow: inset 0 0 0 1px #e6ebe0, inset 0 0 0 2px #333; }
.marquee::after { content: ""; position: absolute; right: -2px; bottom: -2px; width: 5px; height: 5px; background: #222; border: 1px solid #fff; }

.scroll { width: 15px; flex: none; display: flex; flex-direction: column; padding-bottom: 5px; background: #7a9cca; border: solid #4f74a9; border-width: 0 1px; }
.split { height: 7px; margin: 1px; border: 1px solid #54749f; background: #e8f0fa; }
.scroll button { height: 17px; }
.thumb-bar { flex: 1; display: flex; align-items: center; justify-content: center; border: 1px solid #5a7298; border-radius: 2px;
            background: linear-gradient(90deg, #eef2f6, #dde5ed 45%, #b5c6dc 55%, #c8d6e8); }
.grip { width: 8px; height: 8px; background: repeating-linear-gradient(#7c8591 0 1px, #e9eef4 1px 2px); }

/* Watermark */
.brand { position: absolute; right: 9px; bottom: 8px; z-index: 5; display: flex; flex-direction: column; align-items: flex-end; color: #ff6699; paint-order: stroke; -webkit-text-stroke: 4px #fff; }
.brand svg { margin-right: 45px; }
.brand strong { font: 900 23px/32px "Noto Sans CJK KR", sans-serif; text-shadow: 1px 1px 2px #999; }
.brand span { font: 700 11px/14px Lato, sans-serif; }
```
